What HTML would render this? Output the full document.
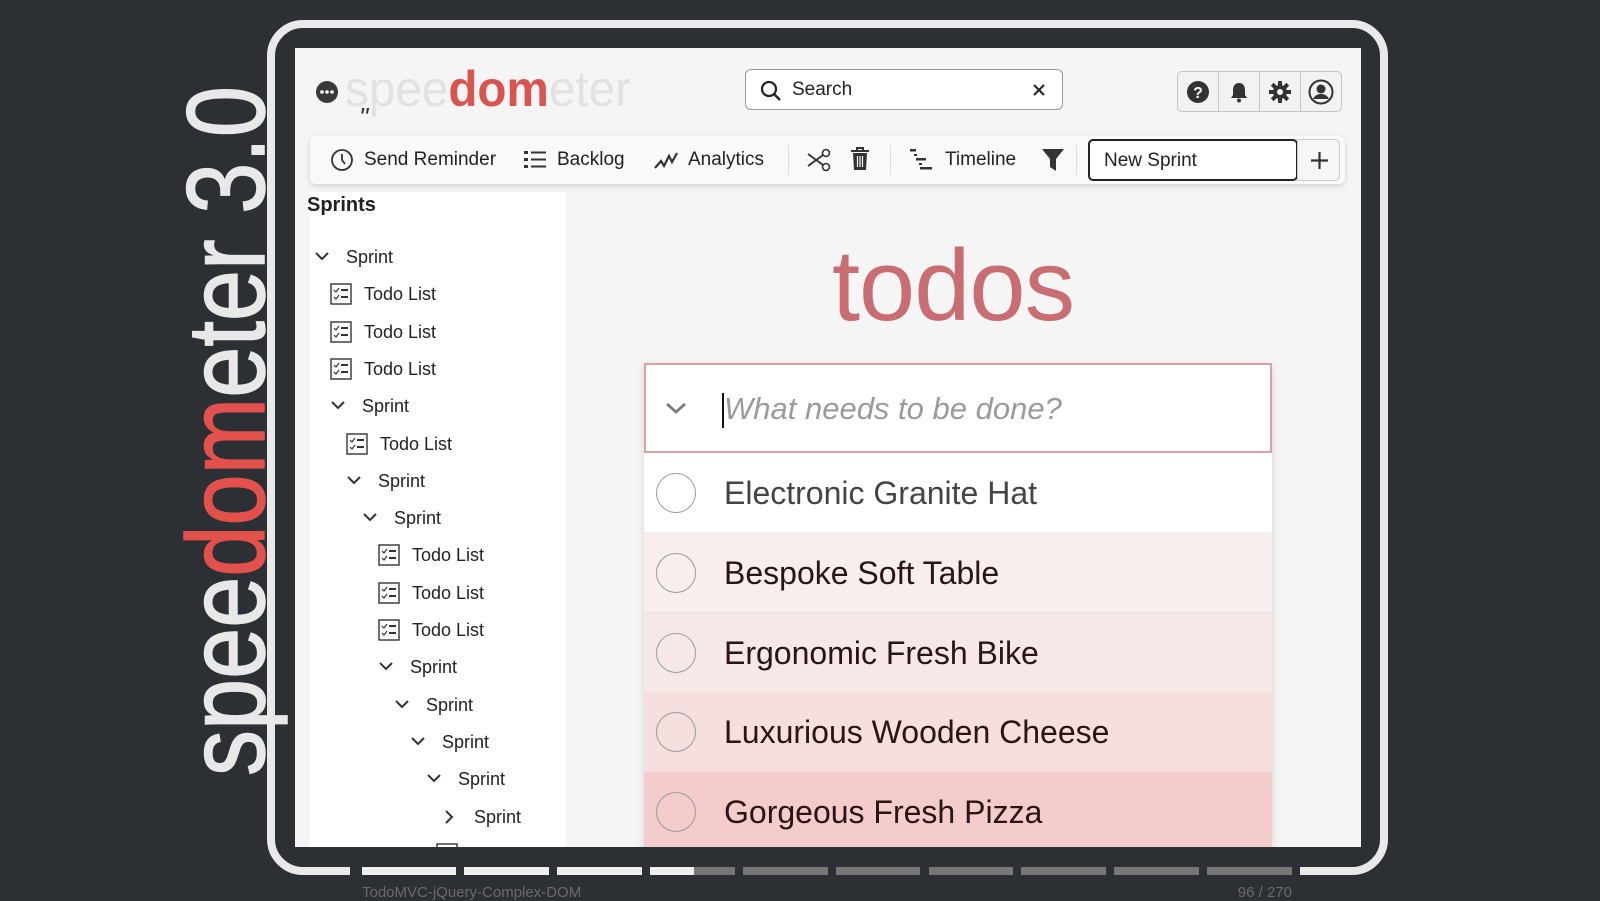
<!DOCTYPE html>
<html><head><meta charset="utf-8">
<style>
*{box-sizing:border-box;margin:0;padding:0}
body{width:1600px;height:900px;background:#2c2f34;position:relative;overflow:hidden;font-family:"Liberation Sans",Arial,sans-serif;color:#222}
.abs{position:absolute}
.frame{left:267px;top:20px;width:1121px;height:855px;border:8px solid #e9e9e9;border-radius:36px}
.content{left:295px;top:48px;width:1066px;height:799px;background:#f5f5f5;overflow:hidden}
.search{left:450px;top:21px;width:318px;height:41px;border:1.5px solid #9a9a9a;border-radius:6px;background:#fff}
.search span{position:absolute;left:46px;top:9px;font-size:19px;color:#222}
.ib{top:23px;width:42px;height:41px;border:1px solid #c4c4c4;background:#f2f2f2;display:flex;align-items:center;justify-content:center}
.tb{left:15px;top:88px;width:1035px;height:48px;background:#f9f9f9;border-radius:6px;box-shadow:0 2px 6px rgba(0,0,0,.15)}
.tb .t{position:absolute;top:13px;font-size:19px;color:#222}
.sep{position:absolute;top:9px;width:1px;height:30px;background:#ddd}
.side{left:15px;top:144px;width:256px;height:660px;background:#fff}
.row{position:absolute;font-size:18px;color:#222;height:22px;line-height:22px}
.todo{left:349px;top:315px;width:628px}
.item{position:absolute;left:0;width:628px;height:80px}
.item .c{position:absolute;left:12px;top:20px;width:40px;height:40px;border:1.5px solid #9a9a9a;border-radius:50%}
.item .x{position:absolute;left:80px;top:22px;font-size:32px;color:#2a1515}
</style></head><body>

<svg class="abs" style="left:0;top:0" width="1600" height="900">
  <text transform="translate(264,776) rotate(-90)" font-family="Liberation Sans, sans-serif" font-size="110" textLength="690" lengthAdjust="spacingAndGlyphs" fill="#e8e8e8" stroke="#e8e8e8" stroke-width="1.5">spee<tspan fill="#e2514c" stroke="#e2514c">dom</tspan>eter 3.0</text>
</svg>

<div class="abs frame"></div>

<div class="abs content">
  <svg class="abs" style="left:20px;top:20px" width="330" height="80">
    <circle cx="12" cy="24" r="11" fill="#3a3a3a"/>
    <circle cx="7" cy="24" r="1.8" fill="#fff"/><circle cx="12" cy="24" r="1.8" fill="#fff"/><circle cx="17" cy="24" r="1.8" fill="#fff"/>
    <text x="30" y="38" font-family="Liberation Sans, sans-serif" font-size="50" textLength="286" lengthAdjust="spacingAndGlyphs" fill="#e2e2e2">spee<tspan fill="#d9534f" font-weight="bold">dom</tspan>eter</text>
    <text x="44" y="58" font-family="Liberation Sans, sans-serif" font-size="26" font-style="italic" fill="#333">"</text>
  </svg>
  <div class="abs search">
    <svg class="abs" style="left:14px;top:10px" width="22" height="22" viewBox="0 0 22 22"><circle cx="9" cy="9" r="7" fill="none" stroke="#222" stroke-width="2.2"/><path d="M14 14l6 6" stroke="#222" stroke-width="2.4"/></svg>
    <span>Search</span>
    <svg class="abs" style="left:287px;top:14px" width="12" height="12"><path d="M1 1l10 10M11 1L1 11" stroke="#222" stroke-width="2"/></svg>
  </div>
  <div class="abs ib" style="left:882px;border-radius:5px 0 0 5px"><svg width="24" height="24"><circle cx="12" cy="12" r="11" fill="#333"/><text x="12" y="18" text-anchor="middle" font-size="16" font-weight="bold" fill="#fff" font-family="Liberation Sans">?</text></svg></div>
  <div class="abs ib" style="left:923px"><svg width="24" height="24"><path d="M12 3c-4 0-6 3-6 7v5l-2 3h16l-2-3v-5c0-4-2-7-6-7z" fill="#333"/><circle cx="12" cy="20.5" r="2" fill="#333"/></svg></div>
  <div class="abs ib" style="left:964px"><svg width="24" height="24" viewBox="0 0 24 24"><g fill="#333"><circle cx="12" cy="12" r="7"/><rect x="10" y="1" width="4" height="22"/><rect x="1" y="10" width="22" height="4"/><rect x="10" y="1" width="4" height="22" transform="rotate(45 12 12)"/><rect x="10" y="1" width="4" height="22" transform="rotate(-45 12 12)"/></g><circle cx="12" cy="12" r="3" fill="#f2f2f2"/></svg></div>
  <div class="abs ib" style="left:1005px;border-radius:0 5px 5px 0"><svg width="26" height="26"><circle cx="13" cy="13" r="11.5" fill="none" stroke="#333" stroke-width="2"/><circle cx="13" cy="10" r="4.5" fill="#333"/><path d="M5 20c2-4 5-5 8-5s6 1 8 5z" fill="#333"/></svg></div>

  <div class="abs tb">
    <svg class="abs" style="left:20px;top:12px" width="24" height="24"><circle cx="12" cy="12" r="10" fill="none" stroke="#333" stroke-width="1.8"/><path d="M12 6v6l3 4" fill="none" stroke="#333" stroke-width="1.8"/></svg>
    <span class="t" style="left:54px">Send Reminder</span>
    <svg class="abs" style="left:214px;top:13px" width="22" height="22"><g fill="#333"><rect x="0" y="2" width="4" height="3"/><rect x="0" y="9" width="4" height="3"/><rect x="0" y="16" width="4" height="3"/><rect x="7" y="2.5" width="15" height="2"/><rect x="7" y="9.5" width="15" height="2"/><rect x="7" y="16.5" width="15" height="2"/></g></svg>
    <span class="t" style="left:247px">Backlog</span>
    <svg class="abs" style="left:344px;top:14px" width="24" height="20"><path d="M1 18l6-7 3 5 5-10 3 6 5-9" fill="none" stroke="#333" stroke-width="2.2"/></svg>
    <span class="t" style="left:378px">Analytics</span>
    <div class="sep" style="left:478px"></div>
    <svg class="abs" style="left:496px;top:12px" width="26" height="24"><circle cx="20" cy="5" r="3.5" fill="none" stroke="#333" stroke-width="1.6"/><circle cx="20" cy="19" r="3.5" fill="none" stroke="#333" stroke-width="1.6"/><path d="M2 6l15 11M2 18l15-11" stroke="#333" stroke-width="1.8"/></svg>
    <svg class="abs" style="left:540px;top:11px" width="20" height="24"><path d="M1 4h18M7 4V1h6v3" fill="none" stroke="#333" stroke-width="2"/><path d="M3 6h14l-1 17H4z" fill="#333"/><path d="M7.5 9v11M10 9v11M12.5 9v11" stroke="#f9f9f9" stroke-width="1.2"/></svg>
    <div class="sep" style="left:580px"></div>
    <svg class="abs" style="left:600px;top:12px" width="24" height="24"><g fill="#333"><rect x="0" y="1" width="6" height="2.5"/><rect x="4" y="6" width="3" height="2"/><rect x="6" y="10" width="10" height="2.5"/><rect x="9" y="15" width="3" height="2"/><rect x="10" y="19" width="12" height="2.5"/></g></svg>
    <span class="t" style="left:635px">Timeline</span>
    <svg class="abs" style="left:732px;top:12px" width="22" height="24"><path d="M0 1h22l-8 10v12l-6-4v-8z" fill="#333"/></svg>
    <div class="sep" style="left:766px"></div>
    <div class="abs" style="left:778px;top:3px;width:210px;height:42px;border:2px solid #222;border-radius:5px;background:#fff"><span style="position:absolute;left:14px;top:9px;font-size:19px">New Sprint</span></div>
    <div class="abs" style="left:987px;top:3px;width:43px;height:42px;border:1px solid #c8c8c8;border-radius:0 5px 5px 0;background:#f6f6f6"><svg class="abs" style="left:12px;top:11px" width="19" height="19"><path d="M9.5 1v17M1 9.5h17" stroke="#333" stroke-width="2.2"/></svg></div>
  </div>

  <div class="abs side">
    <div class="row" style="left:-3px;top:2px;font-weight:bold;font-size:20px">Sprints</div>
  </div>

  <div class="abs" style="left:537px;top:178px;font-size:101px;color:#c2565c;letter-spacing:-1px;line-height:120px;opacity:.85">todos</div>
  <div class="abs todo" style="box-shadow:0 2px 8px rgba(0,0,0,.12);height:500px">
    <div class="abs" style="left:0;top:0;width:628px;height:90px;background:#fff;border:2px solid #dba0a3"></div>
    <svg class="abs" style="left:21px;top:38px" width="22" height="14"><path d="M2 3l9 8 9-8" fill="none" stroke="#777" stroke-width="2.6"/></svg>
    <div class="abs" style="left:78px;top:30px;width:2px;height:35px;background:#111"></div>
    <div class="abs" style="left:80px;top:28px;font-size:31px;font-style:italic;color:#9a9a9a">What needs to be done?</div>
    <div class="item" style="top:90px;background:#fff"><div class="c"></div><div class="x" style="color:#444">Electronic Granite Hat</div></div>
    <div class="item" style="top:169px;background:#f8eeee;border-top:1px solid #eee"><div class="c"></div><div class="x">Bespoke Soft Table</div></div>
    <div class="item" style="top:249px;background:#f7e8e8;border-top:1px solid #f0e0e0"><div class="c"></div><div class="x">Ergonomic Fresh Bike</div></div>
    <div class="item" style="top:329px;background:#f5dfdf"><div class="c"></div><div class="x">Luxurious Wooden Cheese</div></div>
    <div class="item" style="top:409px;background:#f4cccc"><div class="c"></div><div class="x">Gorgeous Fresh Pizza</div></div>
  </div>
</div>

<div class="abs" style="left:350px;top:866px;width:950px;height:10px;background:#2c2f34"></div>
<div class="abs" style="left:362px;top:867px;width:94px;height:8px;background:#eee"></div>
<div class="abs" style="left:464px;top:867px;width:85px;height:8px;background:#eee"></div>
<div class="abs" style="left:557px;top:867px;width:85px;height:8px;background:#eee"></div>
<div class="abs" style="left:650px;top:867px;width:44px;height:8px;background:#eee"></div>
<div class="abs" style="left:694px;top:867px;width:41px;height:8px;background:#777"></div>
<div class="abs" style="left:743px;top:867px;width:85px;height:8px;background:#777"></div>
<div class="abs" style="left:836px;top:867px;width:84px;height:8px;background:#777"></div>
<div class="abs" style="left:929px;top:867px;width:84px;height:8px;background:#777"></div>
<div class="abs" style="left:1021px;top:867px;width:85px;height:8px;background:#777"></div>
<div class="abs" style="left:1114px;top:867px;width:85px;height:8px;background:#777"></div>
<div class="abs" style="left:1207px;top:867px;width:85px;height:8px;background:#777"></div>
<div class="abs" style="left:362px;top:884px;font-size:15px;color:#6a6a6a">TodoMVC-jQuery-Complex-DOM</div>
<div class="abs" style="left:1192px;top:884px;width:100px;text-align:right;font-size:15px;color:#6a6a6a">96 / 270</div>

<script>
(function(){
var rows=[["s",322],["t",330],["t",330],["t",330],["s",338],["t",346],["s",354],["s",370],["t",378],["t",378],["t",378],["s",386],["s",402],["s",418],["s",434],["r",450],["i",436]];
var h="";
rows.forEach(function(r,i){
 var cy=257+i*37.3, x=r[1];
 if(r[0]=="t"||r[0]=="i"){
  h+='<svg class="abs" style="left:'+x+'px;top:'+(cy-11)+'px" width="22" height="22"><rect x="1" y="1" width="20" height="20" fill="none" stroke="#333" stroke-width="1.4"/><path d="M4 7l2 2 3-4M4 14l2 2 3-4" fill="none" stroke="#333" stroke-width="1.2"/><path d="M11 7h7M11 14h7" stroke="#333" stroke-width="2"/></svg>';
  if(r[0]=="t") h+='<div class="row" style="left:'+(x+34)+'px;top:'+(cy-11)+'px">Todo List</div>';
 } else {
  var p=r[0]=="s"?"M1 3l6 6 6-6":"M3 1l6 6-6 6";
  h+='<svg class="abs" style="left:'+(x-7)+'px;top:'+(cy-7)+'px" width="14" height="14"><path d="'+p+'" fill="none" stroke="#333" stroke-width="2"/></svg>';
  h+='<div class="row" style="left:'+(x+24)+'px;top:'+(cy-11)+'px">Sprint</div>';
 }
});
var d=document.createElement("div");d.className="abs";d.style.cssText="left:0;top:0;width:1600px;height:847px;overflow:hidden";d.innerHTML=h;
document.body.appendChild(d);
})();
</script>
</body></html>
